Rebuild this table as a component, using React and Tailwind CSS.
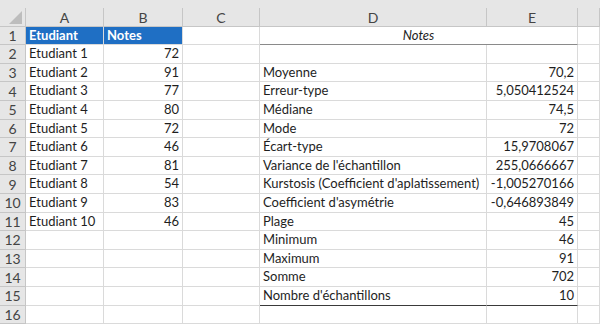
import React from "react";

const cols = ["A", "B", "C", "D", "E", ""];

const students = [
  ["Etudiant 1", "72"],
  ["Etudiant 2", "91"],
  ["Etudiant 3", "77"],
  ["Etudiant 4", "80"],
  ["Etudiant 5", "72"],
  ["Etudiant 6", "46"],
  ["Etudiant 7", "81"],
  ["Etudiant 8", "54"],
  ["Etudiant 9", "83"],
  ["Etudiant 10", "46"],
];

// descriptive stats start on row 3
const stats = [
  ["Moyenne", "70,2"],
  ["Erreur-type", "5,050412524"],
  ["Médiane", "74,5"],
  ["Mode", "72"],
  ["Écart-type", "15,9708067"],
  ["Variance de l'échantillon", "255,0666667"],
  ["Kurstosis (Coefficient d'aplatissement)", "-1,005270166"],
  ["Coefficient d'asymétrie", "-0,646893849"],
  ["Plage", "45"],
  ["Minimum", "46"],
  ["Maximum", "91"],
  ["Somme", "702"],
  ["Nombre d'échantillons", "10"],
];

const cell = "border-r border-b border-[#dadada] px-[3px] flex items-center whitespace-nowrap overflow-hidden";

const Row = ({ n }) => {
  const s = n >= 2 && n <= 11 ? students[n - 2] : null;
  const st = n >= 3 && n <= 15 ? stats[n - 3] : null;
  const last = n === 15 ? "border-b-[#3a3a3a] border-b-[1.5px]" : "";

  if (n === 1) {
    return (
      <>
        <div className="bg-[#e6e6e6] border-r border-b border-[#c6c6c6] flex items-center justify-center text-[#444] text-[14px]">1</div>
        <div className={`${cell} bg-[#1f6fc4] text-white font-bold`}>Etudiant</div>
        <div className={`${cell} bg-[#1f6fc4] text-white font-bold`}>Notes</div>
        <div className={cell}></div>
        <div className="col-span-2 border-r border-b-[1.5px] border-r-[#dadada] border-b-[#8a8a8a] flex items-center justify-center italic">
          Notes
        </div>
        <div className={cell}></div>
      </>
    );
  }

  return (
    <>
      <div className="bg-[#e6e6e6] border-r border-b border-[#c6c6c6] flex items-center justify-center text-[#444] text-[14px]">{n}</div>
      <div className={cell}>{s ? s[0] : ""}</div>
      <div className={`${cell} justify-end`}>{s ? s[1] : ""}</div>
      <div className={cell}></div>
      <div className={`${cell} ${last}`}>{st ? st[0] : ""}</div>
      <div className={`${cell} justify-end ${last}`}>{st ? st[1] : ""}</div>
      <div className={cell}></div>
    </>
  );
};

export default function App() {
  const rows = Array.from({ length: 16 }, (_, i) => i + 1);
  return (
    <div
      className="w-[600px] h-[325px] overflow-hidden bg-white text-[#1e1e1e] text-[13px]"
      style={{ fontFamily: "Lato, 'Open Sans', sans-serif" }}
    >
      <div className="h-[8px] bg-[#e6e6e6]"></div>
      <div className="grid grid-cols-[26px_78px_79px_77px_227px_91px_1fr] auto-rows-[18.6px]">
        {/* column letters */}
        <div className="h-[19px] bg-[#e6e6e6] border-r border-b border-[#c6c6c6] relative">
          <div className="absolute right-[3px] bottom-[2px] w-0 h-0 border-l-[13px] border-l-transparent border-b-[13px] border-b-[#bdbdbd]"></div>
        </div>
        {cols.map((c, i) => (
          <div
            key={i}
            className="h-[19px] bg-[#e6e6e6] border-r border-b border-[#c6c6c6] flex items-center justify-center text-[#444] text-[14px]"
          >
            {c}
          </div>
        ))}
        {rows.map((n) => (
          <Row key={n} n={n} />
        ))}
      </div>
    </div>
  );
}
